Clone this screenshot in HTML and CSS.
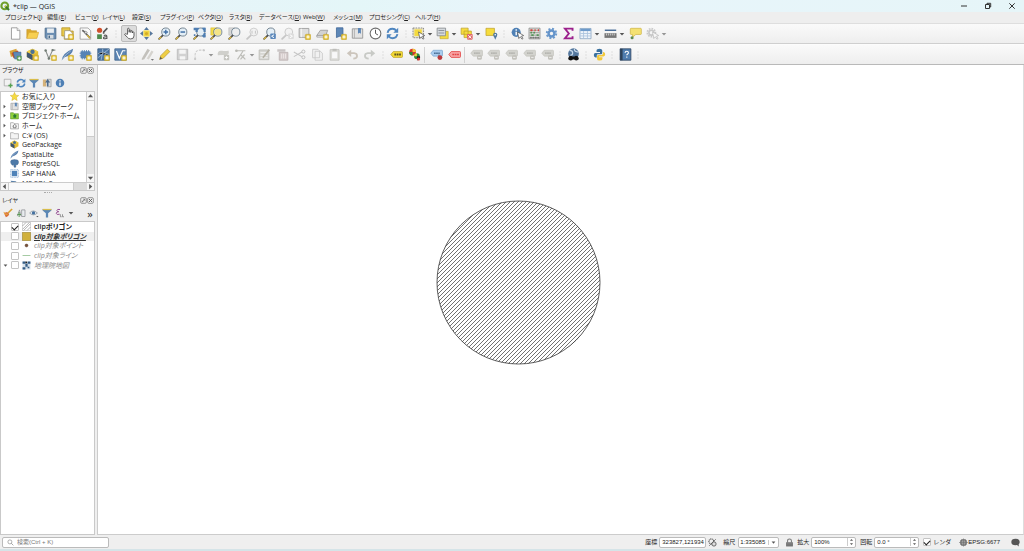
FILE: index.html
```html
<!DOCTYPE html>
<html lang="ja">
<head>
<meta charset="utf-8">
<title>*clip — QGIS</title>
<link rel="stylesheet" href="styles.css">
</head>
<body>
<svg class="sprite" aria-hidden="true">
  <defs>
    <g id="plus"><rect x="9" y="9" width="6.6" height="6.6" rx="1.2" fill="#e6c53c" stroke="#b8982c" stroke-width=".6"/><path d="M12.3 10.3v4M10.3 12.3h4" stroke="#fff" stroke-width="1.3"/></g>
    <g id="lens"><path d="M6.6 9.6 1.4 14.6" stroke="#4b4b4b" stroke-width="2.2" stroke-linecap="round"/><path d="M3.6 12.6 1.6 14.5" stroke="#d9b53a" stroke-width="1.6" stroke-linecap="round"/><circle cx="9.6" cy="6.2" r="5" fill="#e3eef6" stroke="#6a7b88" stroke-width="1.1"/></g>
    <g id="lensgray" opacity=".4"><path d="M6.6 9.6 1.4 14.6" stroke="#888" stroke-width="2.2" stroke-linecap="round"/><circle cx="9.6" cy="6.2" r="4.8" fill="#eee" stroke="#888" stroke-width="1.1"/></g>
    <g id="cursor"><path d="M8 6l1.6 8.2 1.9-2.2 2 3 1.3-.9-1.9-2.9 2.7-.7z" fill="#fff" stroke="#555" stroke-width=".9"/></g>
    <g id="tag"><path d="M1 8l3-3.6h10.4q1 0 1 1v5.2q0 1-1 1H4z"/></g>
  </defs>
  <symbol id="qgis" viewBox="0 0 16 16"><circle cx="7.6" cy="7.8" r="5.4" fill="none" stroke="#6fa02c" stroke-width="3.4"/><path d="M8 8l6.5 6.5" stroke="#3d7a28" stroke-width="3.2"/><path d="M7.2 7.2l3.4.2-3 3z" fill="#ecd23b"/></symbol>
  <symbol id="new" viewBox="0 0 16 16"><path d="M3 1h7l3.4 3.4V15H3z" fill="#fff" stroke="#8c8c8c"/><path d="M10 1v3.4h3.4" fill="#e6e6e6" stroke="#8c8c8c" stroke-width=".8"/></symbol>
  <symbol id="open" viewBox="0 0 16 16"><path d="M1 13.8V3h4.5l1.4 1.6H13V7" fill="#dba92e" stroke="#c79628" stroke-width=".7"/><path d="M3.4 6.6H15.6L13.4 14H1z" fill="#f7cf51" stroke="#d3a22c" stroke-width=".7"/></symbol>
  <symbol id="save" viewBox="0 0 16 16"><path d="M1.4 1.4h13.2v13.2H3L1.4 13z" fill="#6c8fb3" stroke="#476787"/><path d="M3.8 1.8h8.4v5.4H3.8z" fill="#e8edf1"/><path d="M4.4 9.8h7.2v4.4H4.4z" fill="#d5dbe0"/><path d="M5.6 10.6h1.8v3H5.6z" fill="#476787"/></symbol>
  <symbol id="layout" viewBox="0 0 16 16"><path d="M1 1h10v4h4v10H4V11H1z" fill="#e7c84a" stroke="#b8952c"/><path d="M4.5 4.5h6.5l3 3v7H4.5z" fill="#fff" stroke="#888" stroke-width=".8"/><use href="#plus"/></symbol>
  <symbol id="layouts" viewBox="0 0 16 16"><path d="M1.4 1.2H11l3.4 3.4V15H1.4z" fill="#fafafa" stroke="#999"/><path d="M4 4l4 3M6.5 6l7 7.4" stroke="#666" stroke-width="2"/><path d="M6.6 6.4l1.7-1.5 2 2-2 1.7z" fill="#d9d9d9" stroke="#666" stroke-width=".6"/><path d="M10 10l3.6 3.8" stroke="#d9b53a" stroke-width="1.6"/></symbol>
  <symbol id="style" viewBox="0 0 16 16"><circle cx="4.4" cy="4" r="3.2" fill="#d0502c"/><path d="M9 6.6 14 1.4M8.4 7.4l2 0" stroke="#555" stroke-width="2"/><rect x="1.4" y="9" width="5.8" height="5.8" fill="#4f8a4c"/><path d="M9.6 10.4q3.8-1.2 3.8 1.2v3.2M13.2 12q-4-.2-4 1.6t4 .2" fill="none" stroke="#555" stroke-width="1.3"/></symbol>
  <symbol id="hand" viewBox="0 0 16 16"><path d="M5.6 9V2.7q0-1.2 1-1.2t1 1.2V6.5 4.6q.2-1 1.1-1t1 1v2.2-1.4q.2-.9 1-.9t1 .9v2-.7q.2-.7.9-.7t.9.9v4q0 3.8-4 3.8-3 0-4.2-2.2L2.2 9.6q-.4-1 .5-1.3t1.5.4z" fill="#fff" stroke="#444" stroke-width="1"/></symbol>
  <symbol id="pansel" viewBox="0 0 16 16"><rect x="4.2" y="4.2" width="7.6" height="7.6" fill="#f2d640"/><path d="M8 0l3 3.8H5zM8 16l3-3.8H5zM0 8l3.8-3v6zM16 8l-3.8-3v6z" fill="#56779c"/><circle cx="8" cy="8" r="2" fill="#d4ad2a"/></symbol>
  <symbol id="zin" viewBox="0 0 16 16"><use href="#lens"/><path d="M9.6 3.4v5.6M6.8 6.2h5.6" stroke="#3f6ea5" stroke-width="1.7"/></symbol>
  <symbol id="zout" viewBox="0 0 16 16"><use href="#lens"/><path d="M6.8 6.2h5.6" stroke="#3f6ea5" stroke-width="1.8"/></symbol>
  <symbol id="zfull" viewBox="0 0 16 16"><use href="#lens"/><path d="M3.4 1h4v1.6L5.8 4v2H3zM15.4 1h-4v1.6L13 4v2h2.6zM15.4 12h-4v-1.8L13 9V7.4h2.6z" fill="#4f7eb2"/><path d="M.8 1h3v3h-3zM12.4 1h3v3h-3zM12.4 10h3v3h-3zM1 9h2v2H1z" fill="#4f7eb2"/></symbol>
  <symbol id="zsel" viewBox="0 0 16 16"><path d="M1 1h8v9H1z" fill="#f4dc49" stroke="#cdb02e" stroke-width=".6"/><use href="#lens"/><circle cx="9.6" cy="6.2" r="4.2" fill="#f4e487"/></symbol>
  <symbol id="zlay" viewBox="0 0 16 16"><path d="M1 1h7v9H1z" fill="#d8d8d8" stroke="#aaa" stroke-width=".6"/><use href="#lens"/><circle cx="9.6" cy="6.2" r="4.2" fill="#eee"/></symbol>
  <symbol id="znat" viewBox="0 0 16 16"><use href="#lensgray"/><path d="M7.4 4.6v3.6M11.6 4.6v3.6" stroke="#bbb"/></symbol>
  <symbol id="zlast" viewBox="0 0 16 16"><use href="#lens"/><rect x="9" y="8" width="6.8" height="6.8" rx="1" fill="#5b88bb"/><path d="M13.6 9.6l-3 1.8 3 1.8" fill="none" stroke="#fff" stroke-width="1.2"/></symbol>
  <symbol id="znext" viewBox="0 0 16 16"><use href="#lensgray"/><rect x="9" y="8" width="6.8" height="6.8" rx="1" fill="#dcdcdc"/><path d="M11 9.6l3 1.8-3 1.8" fill="none" stroke="#fff" stroke-width="1.2"/></symbol>
  <symbol id="mapview" viewBox="0 0 16 16"><path d="M1.4 1.8h12v11h-12z" fill="#dedede" stroke="#999"/><path d="M4 2v10.6" stroke="#fff"/><use href="#plus"/></symbol>
  <symbol id="map3d" viewBox="0 0 16 16"><path d="M1 10.4 5.4 4h9L12 10.4z" fill="#d2d2d2" stroke="#999"/><path d="M1 10.4v2h9" fill="none" stroke="#999"/><use href="#plus"/></symbol>
  <symbol id="bmnew" viewBox="0 0 16 16"><path d="M3 1h8v12.4L7.6 11 3 13z" fill="#5d87b7" stroke="#41699a"/><use href="#plus"/></symbol>
  <symbol id="bm" viewBox="0 0 16 16"><path d="M1.6 2.2h12.8v11.6H1.6z" fill="#e3e3e3" stroke="#8f8f8f"/><path d="M4.2 2.4v11.2" stroke="#aaa"/><path d="M8.6 1.2h3.6v7.2L10.4 7 8.6 8.4z" fill="#5d87b7"/></symbol>
  <symbol id="clock" viewBox="0 0 16 16"><circle cx="8" cy="8" r="6.6" fill="#fff" stroke="#6b6b6b" stroke-width="1.3"/><path d="M8 3.4V8l3 1.8" fill="none" stroke="#555" stroke-width="1.2"/></symbol>
  <symbol id="refresh" viewBox="0 0 16 16"><path d="M2 7.2q1-5 6-5 3 0 4.6 2.4M14 8.8q-1 5-6 5-3 0-4.6-2.4" fill="none" stroke="#4f86c0" stroke-width="2.4"/><path d="M15 1v6H9zM1 15V9h6z" fill="#4f86c0"/></symbol>
  <symbol id="select" viewBox="0 0 16 16"><path d="M1.2 1.2h13v12h-13z" fill="#e9e4c8" stroke="#777" stroke-dasharray="2 1.2"/><path d="M3 3h9v8H3z" fill="#f4da3d"/><use href="#cursor"/></symbol>
  <symbol id="selform" viewBox="0 0 16 16"><path d="M5 5.4h10v9H5z" fill="#f4dc3d" stroke="#c5a92c" stroke-width=".8"/><path d="M1.4 1.4h10.4v9.4H1.4z" fill="#d6dade" stroke="#84898d"/><path d="M3 4.2h7.2M3 7.4h7.2" stroke="#8d949b" stroke-width="1.3"/></symbol>
  <symbol id="desel" viewBox="0 0 16 16"><path d="M1.4 1.4h8.6v7.6H1.4zM5 5h9v8H5z" fill="#f6dc3d" stroke="#bda02b" stroke-width=".9"/><rect x="8.6" y="8.6" width="7" height="7" rx="1" fill="#e0696b"/><path d="M10.2 10.2l3.8 3.8M14 10.2l-3.8 3.8" stroke="#fff" stroke-width="1.2"/></symbol>
  <symbol id="selloc" viewBox="0 0 16 16"><path d="M1.2 1.6h10.4v8.8H1.2z" fill="#f6dc3d" stroke="#bda02b" stroke-width=".9"/><circle cx="12.6" cy="9.6" r="2.6" fill="#51789f"/><path d="M10.6 11l2 4.6 2-4.6z" fill="#51789f"/><circle cx="12.6" cy="9.6" r="1" fill="#fff"/></symbol>
  <symbol id="identify" viewBox="0 0 16 16"><circle cx="6.4" cy="6.6" r="5.6" fill="#4f80b5"/><path d="M6.4 5.8v4.4M6.4 2.9v1.6" stroke="#fff" stroke-width="1.7"/><use href="#cursor"/></symbol>
  <symbol id="calc" viewBox="0 0 16 16"><path d="M1.2 1.4h13.6v13.2H1.2z" fill="#e3e6e0" stroke="#757575" stroke-width=".8"/><path d="M2 4h12M2 7h12M2 10h12M2 13h12" stroke="#777" stroke-width=".8"/><path d="M3 4h2.6M8 4h1.4M12 4h1.6" stroke="#d5443f" stroke-width="2.4"/><path d="M3 7h2M6.6 7h2M10.6 10h2.6M4 10h3" stroke="#58955b" stroke-width="2.2"/><path d="M2.6 13h11" stroke="#777" stroke-width="2" stroke-dasharray="2 1"/></symbol>
  <symbol id="gear" viewBox="0 0 16 16"><circle cx="8" cy="8" r="5.8" fill="none" stroke="#6d9acd" stroke-width="2.4" stroke-dasharray="2.4 2.15"/><circle cx="8" cy="8" r="3.6" fill="none" stroke="#6594ca" stroke-width="3"/></symbol>
  <symbol id="sigma" viewBox="0 0 16 16"><path d="M13 4.6V2H3.6L8.4 8l-4.8 6H13v-2.6" fill="none" stroke="#9c208c" stroke-width="2.3"/></symbol>
  <symbol id="table" viewBox="0 0 16 16"><path d="M1.2 1.8h13.6v12.6H1.2z" fill="#eef4fa" stroke="#7f9dbd" stroke-width=".9"/><path d="M1.6 2.2h12.8V5H1.6z" fill="#6e9bcb"/><path d="M1.6 8h13M1.6 11h13M5.6 5v9M10.4 5v9" stroke="#a9c2dc" stroke-width="1"/></symbol>
  <symbol id="measure" viewBox="0 0 16 16"><path d="M1 4h14" stroke="#4c6f98" stroke-width="1.8"/><path d="M.6 7.6h14.8v5.8H.6z" fill="#777"/><path d="M3 8v2.4M5.4 8v2.4M7.8 8v2.4M10.2 8v2.4M12.6 8v2.4" stroke="#eee" stroke-width=".9"/></symbol>
  <symbol id="tip" viewBox="0 0 16 16"><path d="M2.6 1.6h11.6q1 0 1 1v5.6q0 1-1 1H8.4l-4 3.4V9.2H2.6q-1 0-1-1V2.6q0-1 1-1z" fill="#f4e172" stroke="#c9ae3a" stroke-width=".8"/><circle cx="3.8" cy="13.2" r="1.9" fill="#5e8a50"/></symbol>
  <symbol id="action" viewBox="0 0 16 16"><g opacity=".35"><circle cx="6.6" cy="7" r="5" fill="none" stroke="#777" stroke-width="2" stroke-dasharray="2 1.3"/><circle cx="6.6" cy="7" r="3" fill="none" stroke="#777" stroke-width="2"/><use href="#cursor"/></g></symbol>

  <symbol id="dsm" viewBox="0 0 16 16"><path d="M.6 3.6 9 1l2 7-8.600 3z" fill="#d8a53b"/><path d="M3 6l8-3 2.600 7-8 2.600z" fill="#c4522f"/><path d="M5.400 5h9.400v8.600H7z" fill="#5f89b8" stroke="#41658e" stroke-width=".6"/><rect x="9.600" y="9.600" width="6" height="6" rx="1" fill="#5b9b5a"/><path d="M12.600 10.800v3.600M10.800 12.600h3.600" stroke="#fff" stroke-width="1.200"/></symbol>
  <symbol id="gpkg" viewBox="0 0 16 16"><path d="M8 .8 15 4.400v6.800L8 15 1 11.200V4.400z" fill="#e4bd35"/><path d="M1 5l7 3.400V15l-7-3.800z" fill="#41576f"/><path d="M1 4.400 8 .8l7 3.600L8 8.200z" fill="#f0cf4c"/><circle cx="8" cy="4.600" r="2.700" fill="#4c7294"/></symbol>
  <symbol id="gpkgnew" viewBox="0 0 16 16"><use href="#gpkg"/><use href="#plus"/></symbol>
  <symbol id="shp" viewBox="0 0 16 16"><path d="M2 3l4 10L10.600 2.600H14" fill="none" stroke="#8a8f8c" stroke-width="1.300"/><circle cx="2" cy="3" r="1.500" fill="#707b73"/><circle cx="6" cy="13" r="1.500" fill="#707b73"/><circle cx="10.600" cy="2.600" r="1.500" fill="#707b73"/><use href="#plus"/></symbol>
  <symbol id="feather" viewBox="0 0 16 16"><path d="M1 15Q2 6 15 1 14 9 4.400 11.400z" fill="#577fae"/><path d="M1 15Q5 8 12 3.600" fill="none" stroke="#b6cbe1" stroke-width=".8"/></symbol>
  <symbol id="feathernew" viewBox="0 0 16 16"><use href="#feather"/><use href="#plus"/></symbol>
  <symbol id="chip" viewBox="0 0 16 16"><path d="M2 4h12v8.600H2z" fill="#5684b6"/><path d="M4 2.600v11.400M6.600 2.600v11.400M9.200 2.600v11.400M11.800 2.600v11.400M.8 6.400h14.400M.8 9.600h14.400" stroke="#5684b6" stroke-width="1.200"/></symbol>
  <symbol id="chipnew" viewBox="0 0 16 16"><use href="#chip"/><use href="#plus"/></symbol>
  <symbol id="meshnew" viewBox="0 0 16 16"><path d="M1 1h14v14H1z" fill="#4d78a8" stroke="#385a80"/><path d="M1 7l6-2 8 3M7 5V1M7 5l-2 10M1 12l14-11M10 6v9" stroke="#b9d0e6" stroke-width=".8"/><use href="#plus"/></symbol>
  <symbol id="virtnew" viewBox="0 0 16 16"><path d="M1 1h14v14H1z" fill="#5e87b4" stroke="#41658e"/><path d="M3 3.600l3.600 9L10.600 3.400H14" fill="none" stroke="#fff" stroke-width="1.400"/><use href="#plus"/></symbol>
  <symbol id="edits" viewBox="0 0 16 16"><g fill="#c3c1bc"><path d="M1 13 8 1l3 1.800-7 11-3 1z"/><path d="M7 13l6-10 2.400 1.600L9.600 14z" fill="#d5d3ce"/></g><path d="M12 13.600h4l-2 2z" fill="#777"/></symbol>
  <symbol id="pencil" viewBox="0 0 16 16"><path d="M2 14l1.400-4.600 8-8 3.200 3-8.200 8.200z" fill="#efce43" stroke="#b08f28" stroke-width=".8"/><path d="M2 14l1-3.200 2.200 2.200z" fill="#555"/></symbol>
  <symbol id="savegray" viewBox="0 0 16 16"><path d="M1.600 1.600h12.800v12.800H1.600z" fill="#d2d2d2" stroke="#b7b7b7"/><path d="M4 2h8v5H4zM4.600 10h6.800v4H4.600z" fill="#f5f5f5"/></symbol>
  <symbol id="digit" viewBox="0 0 16 16"><path d="M2.600 13.600V8q.6-5.400 6-5.400h5" fill="none" stroke="#ccc" stroke-width="1.300" stroke-dasharray="3 1.400"/><circle cx="2.600" cy="13.600" r="1.400" fill="#c8c8c8"/><circle cx="13.400" cy="2.800" r="1.400" fill="#c8c8c8"/></symbol>
  <symbol id="blob" viewBox="0 0 16 16"><path d="M1 9Q0 2.600 6 3.400t8-.4q2 4-2 5.600H7z" fill="#d0d0cc"/><rect x="8.400" y="8.400" width="6.600" height="6.600" rx="1" fill="#c5c5c0"/><path d="M11.600 9.800v4M9.700 11.700h4" stroke="#fff"/></symbol>
  <symbol id="vertex" viewBox="0 0 16 16"><path d="M2 3.400h12M4.400 14 11 4M8 8l6 6M13 8l-5 6" stroke="#bdbdb8" stroke-width="1.500"/><circle cx="3" cy="3.400" r="1.600" fill="#b9b9b4"/></symbol>
  <symbol id="attr" viewBox="0 0 16 16"><path d="M1.400 2.400h12v12h-12z" fill="#d6d6d2" stroke="#bcbcb7"/><path d="M3 5.600h9M3 9h9M3 12h9" stroke="#f4f4f4"/><path d="M6 12l8-10" stroke="#b4b0a4" stroke-width="2"/></symbol>
  <symbol id="trash" viewBox="0 0 16 16"><path d="M1.600 1.600h10v3h-10z" fill="#c9c4c4"/><path d="M4 5.400h10.600V15H4z" fill="#d4cbcb" stroke="#bbb2b2"/><path d="M7 7v6M9.400 7v6M11.800 7v6" stroke="#f3eeee"/></symbol>
  <symbol id="cut" viewBox="0 0 16 16"><path d="M1 5l10 5.600M1 10.600 11 5" stroke="#c4c4c4" stroke-width="1.300"/><circle cx="12.800" cy="4.400" r="1.900" fill="none" stroke="#bcbcbc" stroke-width="1.200"/><circle cx="12.800" cy="11.400" r="1.900" fill="none" stroke="#bcbcbc" stroke-width="1.200"/></symbol>
  <symbol id="copy" viewBox="0 0 16 16"><path d="M2 1.600h6.600l2 2V12H2zM5 4h6.400L14 6.400V15H5z" fill="#f1f1f1" stroke="#c6c6c6"/></symbol>
  <symbol id="paste" viewBox="0 0 16 16"><path d="M2.600 2h11v13h-11z" fill="#dcdcd8" stroke="#c2c2be"/><path d="M5 5h6.400v7.600H5z" fill="#f8f8f8"/><path d="M5.600 1h5v2.400h-5z" fill="#bdbdb9"/></symbol>
  <symbol id="undo" viewBox="0 0 16 16"><path d="M4 6.400h6q3.600.4 3.600 3.400T9 13" fill="none" stroke="#ccc5bc" stroke-width="2.200"/><path d="M1 6.400 6.400 2v9z" fill="#ccc5bc"/></symbol>
  <symbol id="redo" viewBox="0 0 16 16"><path d="M12 6.400H6q-3.600.4-3.600 3.400T7 13" fill="none" stroke="#c8cac6" stroke-width="2.200"/><path d="M15 6.400 9.600 2v9z" fill="#c8cac6"/></symbol>
  <symbol id="label" viewBox="0 0 16 16"><use href="#tag" fill="#f3d935" stroke="#b79c24" stroke-width=".8"/><path d="M5.400 8h8" stroke="#5d5320" stroke-width="2.200" stroke-dasharray="2.200 .7"/></symbol>
  <symbol id="diagram" viewBox="0 0 16 16"><circle cx="5.600" cy="5" r="4.200" fill="#d8392f"/><path d="M5.600 5V.8A4.200 4.200 0 0 1 9.800 5z" fill="#efcc38"/><path d="M1.400 5h4.200v4.200A4.200 4.200 0 0 1 1.400 5z" fill="#2f8a3c"/><circle cx="11" cy="10" r="3.600" fill="#2b8c3b"/><path d="M11 10H7.400A3.600 3.600 0 0 1 11 6.400z" fill="#efcc38"/><path d="M11 10l3.600 0a3.600 3.600 0 0 1-3.600 5z" fill="#1d1d1d"/><circle cx="13" cy="13.600" r="1.900" fill="#d8392f"/></symbol>
  <symbol id="labelpin" viewBox="0 0 16 16"><use href="#tag" y="-1.600" fill="#a9ccee" stroke="#6f9fcc" stroke-width=".8"/><path d="M5 6.400h7" stroke="#45698f" stroke-width="2" stroke-dasharray="2 .6"/><path d="M11 8v4" stroke="#666"/><circle cx="12.200" cy="11.800" r="3" fill="#b93a3d"/></symbol>
  <symbol id="labelred" viewBox="0 0 16 16"><use href="#tag" fill="#f7a3a3" stroke="#e34646" stroke-width="1"/><path d="M5.400 8h8" stroke="#e34646" stroke-width="1.900" stroke-dasharray="2.200 .7"/></symbol>
  <symbol id="labgray" viewBox="0 0 16 16"><use href="#tag" y="-1.600" fill="#d3d3ce" stroke="#c2c2bc" stroke-width=".8"/><path d="M5 6.400h7" stroke="#a9a9a3" stroke-width="1.600" stroke-dasharray="2 .6"/><rect x="8.600" y="8.600" width="6" height="6" rx="2" fill="#c4c3bd"/><path d="M10 11.600h3" stroke="#f4f4f4"/></symbol>
  <symbol id="meta" viewBox="0 0 16 16"><circle cx="8" cy="7" r="6.600" fill="#54779d"/><path d="M3 3q4 0 4 3T4 9M9 1q0 4 5 4" fill="none" stroke="#c7d9ea" stroke-width="1.500"/><path d="M1.600 14q0-4.600 3.600-4.600l1.400 1h2.800l1.400-1q3.600 0 3.600 4.600z" fill="#151515"/><circle cx="4.600" cy="12.800" r="2.600" fill="#111"/><circle cx="11.400" cy="12.800" r="2.600" fill="#111"/></symbol>
  <symbol id="python" viewBox="0 0 16 16"><path d="M8 1q-3.600 0-3.600 2v2H8.600v1H3Q1 6 1 8.600T3.200 11.600H4.600V9.400q0-1.600 1.800-1.600h3.400q1.600 0 1.600-1.600V3Q11.400 1 8 1z" fill="#3b719f"/><path d="M8 15.400q3.600 0 3.600-2v-2H7.400v-1H13q2-.4 2-2.600T12.800 5H12.200v2.200q0 1.400-1.800 1.400H6.600Q5 8.600 5 10.200v3.200q0 2 3 2z" fill="#f2c93a"/></symbol>
  <symbol id="help" viewBox="0 0 16 16"><path d="M1.400 1h13.200v14H1.400z" fill="#4f7daf" stroke="#2c4260"/><path d="M1.400 1h3v14h-3z" fill="#2e4258"/><path d="M7.400 6q.2-2 2.200-2t2 1.800q0 1-1 1.600t-1 1.600M9.600 10.400v1.600" fill="none" stroke="#fff" stroke-width="1.300"/></symbol>

  <symbol id="addlay" viewBox="0 0 16 16"><path d="M2 2h10.600v10.600H2z" fill="#f2f2f2" stroke="#999"/><path d="M12 8.600v6.800M8.600 12h6.800" stroke="#55a152" stroke-width="2.200"/></symbol>
  <symbol id="filter" viewBox="0 0 16 16"><path d="M1 1.400h14v2.400L9.800 8.400V15H6.200V8.400L1 3.800z" fill="#5b87b6"/><path d="M1 1.400h14v2H1z" fill="#d9bd4b"/></symbol>
  <symbol id="collapse" viewBox="0 0 16 16"><path d="M1.400 2.400h5v11.200h-5z" fill="#d4b27a"/><path d="M8 2h6.600v12H8z" fill="#d5d8da" stroke="#777" stroke-width=".8"/><path d="M8 13V7H5L9 1.400 13 7h-2.600v6z" fill="#4b6a8c"/></symbol>
  <symbol id="info" viewBox="0 0 16 16"><circle cx="8" cy="8" r="6.800" fill="#4f80b5"/><path d="M8 7v5.400M8 3.400v2" stroke="#fff" stroke-width="2"/></symbol>
  <symbol id="star" viewBox="0 0 16 16"><path d="M8 .6l2.200 5 5.300.6-4 3.600 1.200 5.400L8 12.400l-4.700 2.800L4.500 9.800l-4-3.600 5.300-.6z" fill="#f6db3f" stroke="#cbab2c" stroke-width=".8"/></symbol>
  <symbol id="homeproj" viewBox="0 0 16 16"><path d="M1 14V3h5l1.400 1.800H15V14z" fill="#8ed03b" stroke="#5b8f2e"/><path d="M6 12h5V8.600h1.200L8.400 5.400 5 8.600h1z" fill="#2c7a32"/></symbol>
  <symbol id="home" viewBox="0 0 16 16"><path d="M1 14V3h5l1.400 1.800H15V14z" fill="#f7f7f7" stroke="#888"/><path d="M4.600 9.200 8.400 6l3.600 3.200M6 8.800V12h4.600V8.800" fill="none" stroke="#555" stroke-width="1.200"/></symbol>
  <symbol id="folder" viewBox="0 0 16 16"><path d="M1 14V3h5l1.400 1.800H15V14z" fill="#f4f4f4" stroke="#8d8d8d"/></symbol>
  <symbol id="pg" viewBox="0 0 16 16"><path d="M1 5q0-4 5-3.600 2-.8 4 0Q15.400.6 15.200 6q-.4 3-2.600 4.600L10.400 9.600V14q-1.600 1.600-3.200.4L6.600 10.400 4 11Q1.200 8.600 1 5z" fill="#4d7aa8" stroke="#385d85" stroke-width=".7"/></symbol>
  <symbol id="hana" viewBox="0 0 16 16"><path d="M1.200 1.200h13.600v13.600H1.200z" fill="none" stroke="#94b4d6" stroke-width="1.600" stroke-dasharray="1.800 1"/><path d="M3.200 3.200h9.600v9.600H3.200z" fill="#4f83b9"/></symbol>
  <symbol id="mssql" viewBox="0 0 16 16"><path d="M1 3l9 1 5 4-8 6z" fill="#5a80a8"/></symbol>
  <symbol id="brush" viewBox="0 0 16 16"><path d="M8 8 14.600 1.600" stroke="#d8a331" stroke-width="2.600"/><path d="M1 7q4 0 5.400-.8L10 9.600Q9 14 4.600 14.600z" fill="#d96d37"/><path d="M1 7q3 4 6.400 3" fill="none" stroke="#f0c442" stroke-width="1.400"/></symbol>
  <symbol id="addgroup" viewBox="0 0 16 16"><path d="M2 13 5.600 3 8 13M9 3h5.400v10.600H9z" fill="#e9ecef" stroke="#7b7f83"/><path d="M5 6.400v8M2 10.400h6" stroke="#5c9a56" stroke-width="1.600"/></symbol>
  <symbol id="eye" viewBox="0 0 16 16"><path d="M1 8q5.600-6.600 12.400 0Q7 14 1 8z" fill="#e6ecf1" stroke="#76828c"/><circle cx="7.200" cy="7.800" r="2.600" fill="#44709f"/><path d="M11.400 12.600h4l-2 2.200z" fill="#555"/></symbol>
  <symbol id="expr" viewBox="0 0 16 16"><path d="M8 2.400Q3 1.400 3 4q.2 1.800 3 1.900-4 .1-4 2.600.4 2.900 5.400 1.500" fill="none" stroke="#8c3b89" stroke-width="1.400"/><path d="M8.600 10v4h2M12 10v4h2.400" fill="none" stroke="#777" stroke-width="1.200"/></symbol>
  <symbol id="hatchsw" viewBox="0 0 16 16"><path d="M.5.500h15v15H.5z" fill="#fff" stroke="#aaa"/><path d="M1 7l6-6M1 13 13 1M3 15 15 3M9 15l6-6" stroke="#777" stroke-width="1"/></symbol>
  <symbol id="goldsw" viewBox="0 0 16 16"><path d="M.5.500h15v15H.5z" fill="#d0b03c" stroke="#8f7a32"/></symbol>
  <symbol id="dotsw" viewBox="0 0 16 16"><circle cx="8" cy="8" r="2.600" fill="#7a5138" stroke="#50392b" stroke-width=".8"/></symbol>
  <symbol id="linesw" viewBox="0 0 16 16"><path d="M1 8h14" stroke="#9cc59a" stroke-width="1.600"/></symbol>
  <symbol id="tiles" viewBox="0 0 16 16"><path d="M1 1h14v14H1z" fill="#d6e1ea"/><path d="M1 1h5v4H1zM10 1h5v4h-5zM6 5h4v5H6zM1 11h5v4H1zM10 10h3v3h-3z" fill="#345d86"/><path d="M6 1h3v3H6z" fill="#222"/></symbol>
  <symbol id="mag" viewBox="0 0 16 16"><circle cx="6.600" cy="6.600" r="4.600" fill="none" stroke="#777" stroke-width="1.300"/><path d="M10 10l4.600 4.600" stroke="#777" stroke-width="1.500"/></symbol>
  <symbol id="extent" viewBox="0 0 16 16"><circle cx="6" cy="6" r="4.400" fill="none" stroke="#555" stroke-width="2" stroke-dasharray="2 1"/><circle cx="10.600" cy="10.600" r="3.800" fill="#ddd" stroke="#555" stroke-width="1.500"/><path d="M2 14 14 2" stroke="#555" stroke-width="1.200"/></symbol>
  <symbol id="lock" viewBox="0 0 16 16"><path d="M4.600 8V5q0-3.400 3.400-3.400T11.400 5v3" fill="none" stroke="#777" stroke-width="1.800"/><path d="M2 7.600h12V15H2z" fill="#6c6c6c"/><path d="M3 10h10M3 12.400h10" stroke="#929292"/></symbol>
  <symbol id="globe" viewBox="0 0 16 16"><circle cx="8" cy="8" r="5.600" fill="#aaa" stroke="#666" stroke-width="1.200"/><path d="M0 8h16M2 5h12M2 11h12M8 1v14M5 2q-2 6 0 12M11 2q2 6 0 12" fill="none" stroke="#666" stroke-width=".9"/></symbol>
  <symbol id="bubble" viewBox="0 0 16 16"><ellipse cx="8" cy="7" rx="7.400" ry="5.800" fill="#555"/><path d="M9 11l5 4-1-6z" fill="#555"/></symbol>
  <symbol id="dockfloat" viewBox="0 0 16 16"><rect x="1.500" y="1.500" width="13" height="13" rx="3" fill="none" stroke="#777" stroke-width="1.600"/><path d="M5 11l6-6M7 5h4v4M5 8v3h3" fill="none" stroke="#666" stroke-width="1.500"/></symbol>
  <symbol id="dockclose" viewBox="0 0 16 16"><rect x="1.500" y="1.500" width="13" height="13" rx="3" fill="none" stroke="#777" stroke-width="1.600"/><path d="M4.600 4.600l6.800 6.800M11.400 4.600l-6.800 6.800" stroke="#555" stroke-width="2"/></symbol>
  <symbol id="down" viewBox="0 0 8 8"><path d="M1 2.500h6L4 6z" fill="#555"/></symbol>
  <symbol id="up" viewBox="0 0 8 8"><path d="M1 5.500h6L4 2z" fill="#555"/></symbol>
  <symbol id="right" viewBox="0 0 8 8"><path d="M2.500 1v6L6 4z" fill="#555"/></symbol>
  <symbol id="left" viewBox="0 0 8 8"><path d="M5.500 1v6L2 4z" fill="#555"/></symbol>
</svg>

<div class="window">
  <header class="titlebar">
    <svg class="logo"><use href="#qgis"/></svg>
    <h1>*clip — QGIS</h1>
    <div class="winbtns">
      <button aria-label="最小化"><svg viewBox="0 0 8 8"><path d="M1 4h6"/></svg></button>
      <button aria-label="元に戻す"><svg viewBox="0 0 8 8"><path d="M1.500 2.500h4v4h-4zM3 2.500V1.300h3.700V5H5.500"/></svg></button>
      <button aria-label="閉じる"><svg viewBox="0 0 8 8"><path d="M1.300 1.300l5.400 5.400M6.700 1.300 1.300 6.700"/></svg></button>
    </div>
  </header>

  <nav class="menubar">
    <button>プロジェクト(<u>J</u>)</button><button>編集(<u>E</u>)</button><button>ビュー(<u>V</u>)</button><button>レイヤ(<u>L</u>)</button><button>設定(<u>S</u>)</button><button>プラグイン(<u>P</u>)</button><button>ベクタ(<u>O</u>)</button><button>ラスタ(<u>R</u>)</button><button>データベース(<u>D</u>)</button><button>Web(<u>W</u>)</button><button>メッシュ(<u>M</u>)</button><button>プロセシング(<u>C</u>)</button><button>ヘルプ(<u>H</u>)</button>
  </nav>

  <div class="toolbar">
    <div class="group g-project">
      <button aria-label="新規"><svg><use href="#new"/></svg></button>
      <button aria-label="開く"><svg><use href="#open"/></svg></button>
      <button aria-label="保存"><svg><use href="#save"/></svg></button>
      <button aria-label="新規レイアウト"><svg><use href="#layout"/></svg></button>
      <button aria-label="レイアウトマネージャ"><svg><use href="#layouts"/></svg></button>
      <button aria-label="スタイルマネージャ"><svg><use href="#style"/></svg></button>
    </div>
    <i class="grip"></i>
    <div class="group g-nav">
      <button class="pressed" aria-label="地図を移動"><svg><use href="#hand"/></svg></button>
      <button aria-label="選択部分に移動"><svg><use href="#pansel"/></svg></button>
      <button aria-label="拡大"><svg><use href="#zin"/></svg></button>
      <button aria-label="縮小"><svg><use href="#zout"/></svg></button>
      <button aria-label="全域表示"><svg><use href="#zfull"/></svg></button>
      <button aria-label="選択範囲にズーム"><svg><use href="#zsel"/></svg></button>
      <button aria-label="レイヤにズーム"><svg><use href="#zlay"/></svg></button>
      <button aria-label="ネイティブ解像度" disabled><svg><use href="#znat"/></svg></button>
      <button aria-label="前の表示"><svg><use href="#zlast"/></svg></button>
      <button aria-label="次の表示" disabled><svg><use href="#znext"/></svg></button>
      <button aria-label="新規地図ビュー"><svg><use href="#mapview"/></svg></button>
      <button aria-label="新規3D地図ビュー"><svg><use href="#map3d"/></svg></button>
      <button aria-label="新規ブックマーク"><svg><use href="#bmnew"/></svg></button>
      <button aria-label="ブックマーク"><svg><use href="#bm"/></svg></button>
      <button aria-label="時系列コントローラ"><svg><use href="#clock"/></svg></button>
      <button aria-label="再読み込み"><svg><use href="#refresh"/></svg></button>
    </div>
    <i class="grip"></i>
    <div class="group g-select">
      <button class="drop" aria-label="地物を選択"><svg><use href="#select"/></svg><svg class="arrow"><use href="#down"/></svg></button>
      <button class="drop" aria-label="値で選択"><svg><use href="#selform"/></svg><svg class="arrow"><use href="#down"/></svg></button>
      <button class="drop" aria-label="選択解除"><svg><use href="#desel"/></svg><svg class="arrow"><use href="#down"/></svg></button>
      <button aria-label="場所で選択"><svg><use href="#selloc"/></svg></button>
    </div>
    <i class="grip"></i>
    <div class="group g-attr">
      <button aria-label="地物情報"><svg><use href="#identify"/></svg></button>
      <button aria-label="フィールド計算機"><svg><use href="#calc"/></svg></button>
      <button aria-label="ツールボックス"><svg><use href="#gear"/></svg></button>
      <button aria-label="統計"><svg><use href="#sigma"/></svg></button>
      <button class="drop" aria-label="属性テーブル"><svg><use href="#table"/></svg><svg class="arrow"><use href="#down"/></svg></button>
      <button class="drop" aria-label="計測"><svg><use href="#measure"/></svg><svg class="arrow"><use href="#down"/></svg></button>
      <button aria-label="地図のヒント"><svg><use href="#tip"/></svg></button>
      <button class="drop faded" aria-label="アクション"><svg><use href="#action"/></svg><svg class="arrow"><use href="#down"/></svg></button>
    </div>
  </div>

  <div class="toolbar second">
    <div class="group g-source">
      <button aria-label="データソースマネージャ"><svg><use href="#dsm"/></svg></button>
      <button aria-label="新規GeoPackage"><svg><use href="#gpkgnew"/></svg></button>
      <button aria-label="新規シェープファイル"><svg><use href="#shp"/></svg></button>
      <button aria-label="新規SpatiaLite"><svg><use href="#feathernew"/></svg></button>
      <button aria-label="新規一時レイヤ"><svg><use href="#chipnew"/></svg></button>
      <button aria-label="新規メッシュ"><svg><use href="#meshnew"/></svg></button>
      <button aria-label="新規仮想レイヤ"><svg><use href="#virtnew"/></svg></button>
    </div>
    <i class="grip"></i>
    <div class="group g-edit">
      <button aria-label="現在の編集" disabled><svg><use href="#edits"/></svg></button>
      <button aria-label="編集モード切替"><svg><use href="#pencil"/></svg></button>
      <button aria-label="編集を保存" disabled><svg><use href="#savegray"/></svg></button>
      <button class="drop" aria-label="デジタイズ" disabled><svg><use href="#digit"/></svg><svg class="arrow"><use href="#down"/></svg></button>
      <button aria-label="地物を追加" disabled><svg><use href="#blob"/></svg></button>
      <button class="drop" aria-label="頂点ツール" disabled><svg><use href="#vertex"/></svg><svg class="arrow"><use href="#down"/></svg></button>
      <button aria-label="属性を変更" disabled><svg><use href="#attr"/></svg></button>
      <button aria-label="削除" disabled><svg><use href="#trash"/></svg></button>
      <button aria-label="切り取り" disabled><svg><use href="#cut"/></svg></button>
      <button aria-label="コピー" disabled><svg><use href="#copy"/></svg></button>
      <button aria-label="貼り付け" disabled><svg><use href="#paste"/></svg></button>
      <button aria-label="元に戻す" disabled><svg><use href="#undo"/></svg></button>
      <button aria-label="やり直す" disabled><svg><use href="#redo"/></svg></button>
    </div>
    <i class="grip"></i>
    <div class="group g-pair">
      <button aria-label="ラベル"><svg><use href="#label"/></svg></button>
      <button aria-label="ダイアグラム"><svg><use href="#diagram"/></svg></button>
    </div>
    <i class="divider"></i>
    <div class="group g-pair">
      <button aria-label="固定ラベル"><svg><use href="#labelpin"/></svg></button>
      <button aria-label="未配置ラベル"><svg><use href="#labelred"/></svg></button>
    </div>
    <i class="divider"></i>
    <div class="group g-label">
      <button aria-label="ラベルを固定" disabled><svg><use href="#labgray"/></svg></button>
      <button aria-label="ラベルを表示" disabled><svg><use href="#labgray"/></svg></button>
      <button aria-label="ラベルを移動" disabled><svg><use href="#labgray"/></svg></button>
      <button aria-label="ラベルを回転" disabled><svg><use href="#labgray"/></svg></button>
      <button aria-label="ラベルを変更" disabled><svg><use href="#labgray"/></svg></button>
    </div>
    <i class="grip"></i>
    <div class="group"><button aria-label="MetaSearch"><svg><use href="#meta"/></svg></button></div>
    <i class="grip"></i>
    <div class="group"><button aria-label="Python"><svg><use href="#python"/></svg></button></div>
    <i class="grip"></i>
    <div class="group"><button aria-label="ヘルプ"><svg><use href="#help"/></svg></button></div>
    <i class="grip"></i>
  </div>

  <main class="workspace">
    <aside class="side">
      <section class="dock browser">
        <header><h2>ブラウザ</h2><button aria-label="フロート"><svg><use href="#dockfloat"/></svg></button><button aria-label="閉じる"><svg><use href="#dockclose"/></svg></button></header>
        <div class="docktools">
          <button aria-label="レイヤを追加"><svg><use href="#addlay"/></svg></button>
          <button aria-label="再読み込み"><svg><use href="#refresh"/></svg></button>
          <button aria-label="フィルタ"><svg><use href="#filter"/></svg></button>
          <button aria-label="折りたたむ"><svg><use href="#collapse"/></svg></button>
          <button aria-label="プロパティ"><svg><use href="#info"/></svg></button>
        </div>
        <div class="treebox">
          <ul class="tree">
            <li><svg class="exp"></svg><svg><use href="#star"/></svg>お気に入り</li>
            <li><svg class="exp"><use href="#right"/></svg><svg><use href="#bm"/></svg>空間ブックマーク</li>
            <li><svg class="exp"><use href="#right"/></svg><svg><use href="#homeproj"/></svg>プロジェクトホーム</li>
            <li><svg class="exp"><use href="#right"/></svg><svg><use href="#home"/></svg>ホーム</li>
            <li><svg class="exp"><use href="#right"/></svg><svg><use href="#folder"/></svg>C:¥ (OS)</li>
            <li><svg class="exp"></svg><svg><use href="#gpkg"/></svg>GeoPackage</li>
            <li><svg class="exp"></svg><svg><use href="#feather"/></svg>SpatiaLite</li>
            <li><svg class="exp"></svg><svg><use href="#pg"/></svg>PostgreSQL</li>
            <li><svg class="exp"></svg><svg><use href="#hana"/></svg>SAP HANA</li>
            <li><svg class="exp"></svg><svg><use href="#mssql"/></svg>MS SQL Server</li>
          </ul>
          <div class="vbar"><svg><use href="#up"/></svg><i></i><svg><use href="#down"/></svg></div>
          <div class="hbar"><svg><use href="#left"/></svg><i></i><svg><use href="#right"/></svg></div>
        </div>
      </section>
      <div class="splitter"></div>
      <section class="dock layers">
        <header><h2>レイヤ</h2><button aria-label="フロート"><svg><use href="#dockfloat"/></svg></button><button aria-label="閉じる"><svg><use href="#dockclose"/></svg></button></header>
        <div class="docktools">
          <button aria-label="スタイル"><svg><use href="#brush"/></svg></button>
          <button aria-label="グループを追加"><svg><use href="#addgroup"/></svg></button>
          <button aria-label="地図テーマ"><svg><use href="#eye"/></svg></button>
          <button aria-label="凡例をフィルタ"><svg><use href="#filter"/></svg></button>
          <button aria-label="式でフィルタ"><svg><use href="#expr"/></svg></button>
          <svg class="arrow"><use href="#down"/></svg>
          <button class="more" aria-label="その他">»</button>
        </div>
        <ul class="layertree">
          <li class="on"><svg class="exp"></svg><label><input type="checkbox" checked><svg><use href="#hatchsw"/></svg>clipポリゴン</label></li>
          <li class="current"><svg class="exp"></svg><label><input type="checkbox"><svg><use href="#goldsw"/></svg><span>clip対象ポリゴン</span></label></li>
          <li><svg class="exp"></svg><label><input type="checkbox"><svg><use href="#dotsw"/></svg>clip対象ポイント</label></li>
          <li><svg class="exp"></svg><label><input type="checkbox"><svg><use href="#linesw"/></svg>clip対象ライン</label></li>
          <li><svg class="exp"><use href="#down"/></svg><label><input type="checkbox"><svg><use href="#tiles"/></svg>地理院地図</label></li>
        </ul>
      </section>
    </aside>
    <div class="canvas">
      <svg class="feature" viewBox="0 0 165 165" role="img" aria-label="clipポリゴン">
        <defs><pattern id="hatch" width="4" height="4" patternUnits="userSpaceOnUse"><path d="M-1 1l2-2M-1 5 5-1M3 5l2-2" stroke="#333" stroke-width=".7"/></pattern></defs>
        <circle cx="82.500" cy="82.500" r="81.500" fill="url(#hatch)" stroke="#333" stroke-width=".8"/>
      </svg>
    </div>
  </main>

  <footer class="status">
    <div class="locator"><svg><use href="#mag"/></svg><input type="text" placeholder="検索(Ctrl + K)" aria-label="検索"></div>
    <label for="coord">座標</label><input id="coord" class="field coord" type="text" value="323827,121934">
    <button aria-label="範囲表示の切替"><svg><use href="#extent"/></svg></button>
    <label for="scale">縮尺</label>
    <div class="combo"><select id="scale"><option>1:335085</option></select><svg><use href="#down"/></svg></div>
    <button class="lockbtn" aria-label="縮尺をロック"><svg><use href="#lock"/></svg></button>
    <label for="magn">拡大</label>
    <div class="spin"><input id="magn" type="text" value="100%"><span><button aria-label="増やす"><svg><use href="#up"/></svg></button><button aria-label="減らす"><svg><use href="#down"/></svg></button></span></div>
    <label for="rot">回転</label>
    <div class="spin"><input id="rot" type="text" value="0.0 °"><span><button aria-label="増やす"><svg><use href="#up"/></svg></button><button aria-label="減らす"><svg><use href="#down"/></svg></button></span></div>
    <label class="render"><input type="checkbox" checked>レンダ</label>
    <button class="crs"><svg><use href="#globe"/></svg>EPSG:6677</button>
    <button class="log" aria-label="メッセージログ"><svg><use href="#bubble"/></svg></button>
  </footer>
</div>
</body>
</html>
```
FILE: styles.css
```css
* { box-sizing: border-box; }
html, body { height: 100%; margin: 0; }
body {
  font: 7px/9px "Open Sans", "Noto Sans CJK JP", sans-serif;
  color: #222;
  background: #efefef;
  overflow: hidden;
}
button, input, select { font: inherit; color: inherit; margin: 0; padding: 0; border: 0; background: none; }
button { display: flex; align-items: center; justify-content: center; }
h1, h2 { margin: 0; font: inherit; }
ul { margin: 0; padding: 0; list-style: none; }
svg { flex: none; display: block; }
.sprite { position: absolute; width: 0; height: 0; }

.window { display: flex; flex-direction: column; height: 100vh; border-bottom: 2px solid #d5e4e8; }

.titlebar { display: flex; align-items: center; height: 12px; flex: none; background: linear-gradient(90deg, #e8f3f9, #e4f6f8 35%, #e8f5fb 50%, #e6f5f8); }
.logo { width: 10px; height: 10px; }
.titlebar h1 { flex: 1; margin-left: 3px; }
.winbtns { display: flex; }
.winbtns button { width: 24px; height: 12px; }
.winbtns svg { width: 8px; height: 8px; fill: none; stroke: #333; stroke-width: 1; }

.menubar {
  display: grid;
  grid-template-columns: 42px 28px 27px 30px 28px 38px 31px 30px 44px 30px 36px 46px 30px;
  height: 11px;
  flex: none;
  padding-left: 5px;
  background: #eee;
  font-size: 6px;
  font-feature-settings: "palt";
}
.menubar button { justify-content: flex-start; white-space: nowrap; }
.menubar u { text-underline-offset: 1px; }

.toolbar { display: flex; align-items: center; height: 21px; flex: none; padding-left: 7px; background: linear-gradient(#fafafa, #eee); border-top: 1px solid #dedede; border-bottom: 1px solid #cfcfcf; }
.toolbar.second { border-top: 1px solid #fcfcfc; border-bottom: 1px solid #b9b9b9; }
.group { display: flex; justify-content: space-between; }
.group button { width: 16px; height: 17px; }
.group svg { width: 13px; height: 13px; }
.group .drop { width: 24px; }
.group .drop svg:first-child { margin: 0 2px 0 1px; }
.group .arrow { width: 6px; height: 6px; margin-right: 2px; }
.group .pressed { background: #dcdcdc; border: 1px solid #bbb; border-radius: 2px; }
.faded .arrow, button:disabled .arrow { opacity: .6; }
.g-project { width: 104px; }
.g-nav { width: 280px; }
.g-select { width: 88px; }
.g-attr { width: 160px; }
.g-source { width: 122px; }
.g-edit { width: 239px; }
.g-edit .drop { width: 22px; }
.g-edit .arrow { margin-right: 0; }
.g-pair { width: 34px; }
.g-label { width: 87px; }
.grip { width: 10px; height: 10px; flex: none; background: radial-gradient(circle, #c9c9c9 1px, transparent 1px) center / 3px 3px; background-clip: content-box; padding: 0 3px 0 4px; }
.divider { width: 6px; height: 16px; flex: none; background: linear-gradient(90deg, transparent 2px, #d2d2d2 2px 3px, transparent 3px); }

.workspace { flex: 1; min-height: 0; display: flex; }
.side { width: 98px; flex: none; display: flex; flex-direction: column; padding-right: 2px; border-right: 1px solid #ccc; }
.dock header { display: flex; align-items: center; height: 10px; padding: 0 1px 0 2px; font-size: 6px; }
.dock h2 { flex: 1; font-feature-settings: "palt"; }
.dock header svg { width: 7px; height: 7px; }
.docktools { display: flex; align-items: center; height: 16px; gap: 3px; padding-left: 3px; }
.docktools svg { width: 10px; height: 10px; }
.browser .docktools button, .layers .docktools button { width: 10px; }
.docktools .arrow { width: 6px; height: 6px; }
.docktools .more { margin-left: auto; font-size: 11px; }
.treebox { display: grid; grid-template-columns: 1fr 8px; grid-template-rows: 90px 8px; background: #fff; border: 1px solid #c9c9c9; }
.tree { height: 90px; overflow: hidden; font-feature-settings: "palt"; display: grid; grid-auto-rows: 48px; }
.tree { grid-template-rows: repeat(10, calc(96px / 10)); }
.tree li { display: flex; align-items: center; white-space: nowrap; gap: 3px; }
.tree svg { width: 9px; height: 9px; }
svg.exp { width: 5px !important; height: 5px !important; }
.tree .exp { margin: 0 0 0 1px; }
.vbar { display: flex; flex-direction: column; align-items: center; background: #e4e4e4; border-left: 1px solid #ccc; }
.vbar svg, .hbar svg { width: 5px; height: 8px; background: #f6f6f6; }
.vbar svg { width: 7px; }
.vbar svg:last-child { margin-top: auto; }
.vbar i { width: 7px; height: 37px; background: #fafafa; border: 1px solid #ccc; border-width: 1px 0; }
.hbar { grid-column: 1 / 3; display: flex; background: #dcdcdc; border-top: 1px solid #ccc; }
.hbar svg { width: 7px; height: 7px; }
.hbar i { width: 66px; background: #fafafa; border: 1px solid #ccc; border-width: 0 1px; }
.hbar svg:last-child { margin-left: auto; }
.splitter { height: 2px; width: 8px; margin: 1px auto; border-top: 1px dotted #aaa; }
.layers { flex: 1; display: flex; flex-direction: column; min-height: 0; }
.layertree { flex: 1; background: #fff; border: 1px solid #c9c9c9; color: #888; font-style: italic; font-size: 7px; display: grid; grid-template-rows: repeat(5, calc(48px / 5)); font-feature-settings: "palt"; }
.layertree li { display: flex; align-items: center; gap: 3px; padding-left: 2px; white-space: nowrap; }
.layertree label { display: flex; align-items: center; gap: 3px; }
.layertree svg { width: 9px; height: 9px; }
.layertree .on { font-style: normal; font-weight: 600; color: #222; }
.layertree .current { background: #efefef; font-weight: 700; color: #333; text-decoration: underline; }

input[type="checkbox"] { appearance: none; width: 8px; height: 8px; border: 1px solid #c4c4c4; border-radius: 1px; background: #fff; display: grid; place-items: center; }
input[type="checkbox"]:checked::before { content: ""; width: 5px; height: 3px; border: solid #222; border-width: 0 0 1px 1px; transform: rotate(-45deg); }

.canvas { flex: 1; position: relative; background: #fff; border-right: 1px solid #ddd; border-bottom: 1px solid #ccc; }
.feature { position: absolute; left: 338px; top: 135px; width: 165px; height: 165px; }

.status { height: 14px; flex: none; display: flex; align-items: center; padding: 0 4px 0 2px; font: 6px/8px "Liberation Sans", "Noto Sans CJK JP", sans-serif; }
.status svg { width: 9px; height: 9px; }
.locator, .field, .combo, .spin { height: 11px; background: #fff; border: 1px solid #bbb; border-radius: 2px; display: flex; align-items: center; }
.locator { width: 107px; padding-left: 4px; gap: 3px; margin-right: auto; }
.locator svg { width: 7px; height: 7px; }
.locator input { flex: 1; min-width: 0; color: #666; }
.locator input::placeholder { color: #777; }
.coord { width: 47px; padding-left: 2px; margin: 0 2px 0 2px; }
.status > button { margin-right: 6px; }
.combo { width: 41px; margin: 0 6px 0 3px; }
.combo select { appearance: none; flex: 1; min-width: 0; height: 9px; padding-left: 1px; }
.combo svg { width: 10px; height: 5px; border-left: 1px solid #ccc; }
.status > .lockbtn { margin-right: 3px; }
.spin { width: 45px; margin: 0 4px 0 2px; }
.spin input { flex: 1; min-width: 0; padding-left: 2px; }
.spin span { display: flex; flex-direction: column; border-left: 1px solid #ccc; }
.spin svg { width: 7px; height: 4px; }
.render { display: flex; align-items: center; gap: 2px; margin-right: 8px; }
.status > .crs { margin-right: 11px; }
.status > .log { margin: 0; }
```
